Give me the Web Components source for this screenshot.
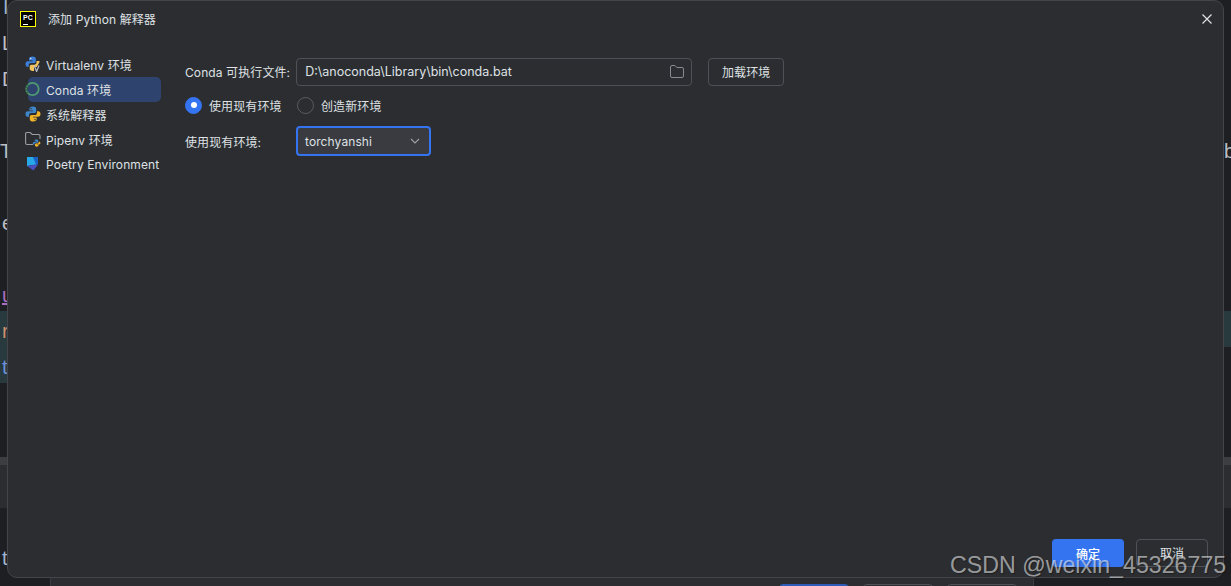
<!DOCTYPE html>
<html lang="zh">
<head>
<meta charset="utf-8">
<title>添加 Python 解释器</title>
<style>
  html, body { margin: 0; height: 100%; background: #1e1f22; overflow: hidden; }
  body { font: 12px "Inter", "Noto Sans CJK SC", sans-serif; letter-spacing: .1px; color: #dfe1e5; }
  svg { display: block; }
</style>
</head>
<body>

<ide-backdrop>
  <code-row style="color:#9fb4d0;padding-left:3.5px">l</code-row>
  <code-row style="color:#bcbec4">L</code-row>
  <code-row style="color:#bcbec4">D</code-row>
  <code-row></code-row>
  <code-row style="color:#bcbec4;padding:0">T<span slot="end" style="margin-right:-4px">b</span></code-row>
  <code-row></code-row>
  <code-row style="color:#bcbec4">e</code-row>
  <code-row></code-row>
  <code-row style="color:#a96fc0"><u>u</u></code-row>
  <code-row tint="full" style="color:#cf8e6d">r</code-row>
  <code-row tint="left" style="color:#6f8fd8">t</code-row>
</ide-backdrop>

<add-dialog>
  <span slot="title">添加 Python 解释器</span>

  <env-item slot="nav">
    <svg slot="icon" width="16" height="16" viewBox="0 0 16 16">
      <path fill="#3d7fd6" d="M7.500.5C5 .5 4 1.500 4 3v1.600h3.600v.6H2.600C1.200 5.200.5 6.300.5 7.900s.7 2.900 2.100 2.900h1.200V9.100c0-1.200 1-2.100 2.200-2.100h3c1 0 1.800-.8 1.800-1.800V2.800C10.800 1.300 9.500.5 7.500.5z"/>
      <circle cx="5.700" cy="2.500" r=".7" fill="#fff"/>
      <path fill="#f2c55c" d="M11.500 5v1.500c0 1.300-1 2.200-2.200 2.200H6.500C5.500 8.700 4.700 9.500 4.700 10.500v2.300c0 1.300 1.300 2.200 3 2.200h1.300V11h2.800l3-5.500C14.500 5.200 13.500 5 12.800 5z"/>
      <path fill="none" stroke="#b4b8bf" stroke-width="1.300" d="M9.200 9.500l2.400 6 2.400-6"/>
    </svg>
    Virtualenv 环境
  </env-item>

  <env-item slot="nav" selected>
    <svg slot="icon" width="16" height="16" viewBox="0 0 16 16">
      <circle cx="7.500" cy="8" r="6.200" fill="none" stroke="#4f9a70" stroke-width="1.800"/>
      <path fill="none" stroke="#2f5f47" stroke-width="1.800" stroke-dasharray="1.500 1.100" d="M2.700 12.200A6.200 6.200 0 0 1 3.900 3"/>
    </svg>
    Conda 环境
  </env-item>

  <env-item slot="nav">
    <svg slot="icon" width="16" height="16" viewBox="0 0 16 16">
      <path fill="#3f86c9" d="M7.800.5C5.300.5 4.300 1.500 4.300 3v1.600h3.600v.6H2.800C1.300 5.200.5 6.300.5 7.900s.8 2.900 2.300 2.900h1.200V9.100c0-1.200 1-2.100 2.200-2.100h3.200c1 0 1.800-.8 1.800-1.800V2.800C11.200 1.300 9.800.5 7.800.5z"/>
      <circle cx="6" cy="2.500" r=".7" fill="#2b2d30"/>
      <path fill="#f0b429" d="M8.200 15.500c2.500 0 3.500-1 3.500-2.500v-1.600H8.100v-.6h5.100c1.500 0 2.300-1.100 2.300-2.700s-.8-2.900-2.300-2.900H12v1.700c0 1.200-1 2.100-2.200 2.100H6.600c-1 0-1.800.8-1.800 1.800v2.400c0 1.500 1.400 2.300 3.400 2.300z"/>
      <circle cx="10" cy="13.500" r=".7" fill="#2b2d30"/>
    </svg>
    系统解释器
  </env-item>

  <env-item slot="nav">
    <svg slot="icon" width="16" height="16" viewBox="0 0 16 16">
      <path fill="none" stroke="#9a9da3" stroke-width="1.100" d="M8 13.500H2A1.500 1.500 0 0 1 .6 12V2.500A1 1 0 0 1 1.600 1.500h3.600l2 2h6.300a1.500 1.500 0 0 1 1.500 1.500v3"/>
      <path fill="#3f86c9" d="M11.500 8.500c-1.300 0-1.800.5-1.800 1.200v.8h1.900v.4H9c-.8 0-1.200.6-1.200 1.300s.4 1.400 1.200 1.400h.6v-.8c0-.7.5-1.100 1.100-1.100h1.600c.5 0 .9-.4.900-.9V9.700c0-.7-.7-1.200-1.700-1.200z"/>
      <path fill="#f0b429" d="M11.700 15.800c1.300 0 1.800-.5 1.800-1.200v-.8h-1.900v-.4h2.600c.8 0 1.200-.6 1.200-1.300s-.4-1.400-1.200-1.400H13.600v.8c0 .7-.5 1.100-1.100 1.100h-1.600c-.5 0-.9.4-.9.9v1.100c0 .7.700 1.200 1.700 1.200z"/>
    </svg>
    Pipenv 环境
  </env-item>

  <env-item slot="nav">
    <svg slot="icon" width="16" height="16" viewBox="0 0 16 16">
      <path fill="#1b62c8" d="M8 1h5v7.500l-3 .5z"/>
      <path fill="#27a9e8" d="M2 1h6l3 7.500L2 10z"/>
      <path fill="#4a4fc0" d="M2 10l9-1.500h2l-4.500 6z"/>
    </svg>
    Poetry Environment
  </env-item>

  <form-row slot="form" height="28" gap="6">
    <span style="padding-bottom:1px">Conda 可执行文件:</span>
    <path-field>D:\anoconda\Library\bin\conda.bat</path-field>
    <outline-button style="margin-left:10px;width:76px">加载环境</outline-button>
  </form-row>
  <form-row slot="form" height="18" top="10">
    <radio-option checked style="width:112px">使用现有环境</radio-option>
    <radio-option>创造新环境</radio-option>
  </form-row>
  <form-row slot="form" height="30" top="12">
    <span style="width:111px">使用现有环境:</span>
    <env-select>torchyanshi</env-select>
  </form-row>

  <primary-button slot="actions">确定</primary-button>
  <outline-button slot="actions" style="width:72px;height:28px">取消</outline-button>
</add-dialog>

<csdn-mark>CSDN @weixin_45326775</csdn-mark>

<script>
class CodeRow extends HTMLElement {
  constructor() {
    super();
    this.attachShadow({ mode: "open" }).innerHTML = `
      <style>
        :host {
          display: flex;
          justify-content: space-between;
          height: 36px;
          padding: 0 1px 0 2px;
          letter-spacing: 0;
          font: 20px/41px "Liberation Sans", sans-serif;
        }
        :host([tint="full"]) { background: #283a3d; }
        :host([tint="left"]) { background: linear-gradient(90deg, #283a3d 50px, transparent 50px); }
      </style>
      <span><slot></slot></span>
      <slot name="end"></slot>`;
  }
}

class IdeBackdrop extends HTMLElement {
  constructor() {
    super();
    this.attachShadow({ mode: "open" }).innerHTML = `
      <style>
        :host {
          display: flex;
          flex-direction: column;
          height: 586px;
          overflow: hidden;
        }
        .lines { height: 470px; margin-top: -13px; flex: none; }
        .bar { height: 8px; background: #3c3e41; flex: none; }
        .panel { height: 43px; background: #2b2d30; flex: none; }
        .tool {
          flex: 1;
          padding: 38px 0 0 2px;
          color: #9fb4d0;
          font: 20px/24px "Liberation Sans", sans-serif;
        }
        .strip {
          height: 8px;
          flex: none;
          display: flex;
        }
        .strip .edge { width: 50px; }
        .strip .mid {
          width: 984px;
          box-sizing: border-box;
          background: #2b2d30;
          border-left: 1px solid #393b40;
          border-right: 1px solid #393b40;
          padding: 6px 0 0 728px;
          display: flex;
          gap: 14px;
        }
        .strip i { display: block; width: 70px; height: 8px; box-sizing: border-box; border: 1px solid #4e5157; border-radius: 4px 4px 0 0; }
        .strip i.on { background: #2e5bb8; border-color: #2e5bb8; }
      </style>
      <div class="lines"><slot></slot></div>
      <div class="bar"></div>
      <div class="panel"></div>
      <div class="tool">t</div>
      <div class="strip">
        <div class="edge"></div>
        <div class="mid"><i class="on"></i><i></i><i></i></div>
      </div>`;
  }
}

class AddDialog extends HTMLElement {
  constructor() {
    super();
    this.attachShadow({ mode: "open" }).innerHTML = `
      <style>
        :host {
          position: absolute;
          left: 7px;
          top: 0;
          width: 1217px;
          height: 578px;
          box-sizing: border-box;
          display: flex;
          flex-direction: column;
          background: #2b2d30;
          border: 1px solid #43454a;
          border-radius: 10px;
          color: #dfe1e5;
        }
        .head {
          height: 36px;
          flex: none;
          display: flex;
          align-items: center;
          padding: 0 10px 0 12px;
          gap: 12px;
        }
        .logo {
          width: 16px;
          height: 16px;
          box-sizing: border-box;
          border: 1px solid #ffff00;
          background: #000;
          color: #fff;
          font: bold 7px/9px "Liberation Sans", sans-serif;
          letter-spacing: 0;
          padding: 1px 0 0 2px;
          position: relative;
        }
        .logo::after {
          content: "";
          position: absolute;
          left: 2px;
          bottom: 1px;
          width: 5px;
          height: 1px;
          background: #fff;
        }
        .title { flex: 1; padding-bottom: 2px; }
        .body {
          flex: 1;
          display: flex;
          min-height: 0;
        }
        .nav {
          width: 153px;
          box-sizing: border-box;
          padding: 15px 0 0 20px;
          flex: none;
        }
        .content {
          flex: 1;
          padding: 21px 0 0 24px;
        }
        .foot {
          flex: none;
          height: 38px;
          display: flex;
          justify-content: flex-end;
          align-items: flex-start;
          gap: 12px;
          padding-right: 15px;
        }
      </style>
      <div class="head">
        <div class="logo">PC</div>
        <div class="title"><slot name="title"></slot></div>
        <svg width="12" height="12" viewBox="0 0 12 12"><path d="M1.500 1.500l9 9M10.500 1.500l-9 9" stroke="#dfe1e5" stroke-width="1.200" fill="none"/></svg>
      </div>
      <div class="body">
        <div class="nav"><slot name="nav"></slot></div>
        <div class="content"><slot name="form"></slot></div>
      </div>
      <div class="foot"><slot name="actions"></slot></div>`;
  }
}

class EnvItem extends HTMLElement {
  constructor() {
    super();
    this.attachShadow({ mode: "open" }).innerHTML = `
      <style>
        :host {
          display: flex;
          align-items: center;
          height: 25px;
          width: 133px;
          box-sizing: border-box;
          padding: 0 0 1px 18px;
          position: relative;
          white-space: nowrap;
          border-radius: 5px;
        }
        :host([selected]) { background: #2e436e; }
        .icon { position: absolute; left: -3px; top: 4px; }
      </style>
      <div class="icon"><slot name="icon"></slot></div>
      <slot></slot>`;
  }
}

class FormRow extends HTMLElement {
  static get observedAttributes() { return ["height", "top", "gap"]; }
  constructor() {
    super();
    this.attachShadow({ mode: "open" }).innerHTML = `
      <style>
        :host {
          display: flex;
          align-items: center;
          white-space: nowrap;
        }
      </style>
      <slot></slot>`;
  }
  attributeChangedCallback() {
    this.style.height = (this.getAttribute("height") || 28) + "px";
    this.style.marginTop = (this.getAttribute("top") || 0) + "px";
    this.style.gap = (this.getAttribute("gap") || 0) + "px";
  }
}

class PathField extends HTMLElement {
  constructor() {
    super();
    this.attachShadow({ mode: "open" }).innerHTML = `
      <style>
        :host {
          display: flex;
          align-items: center;
          justify-content: space-between;
          width: 396px;
          height: 28px;
          box-sizing: border-box;
          padding: 0 7px 1px 8px;
          font-size: 12.500px;
          letter-spacing: 0;
          border: 1px solid #4e5157;
          border-radius: 4px;
        }
      </style>
      <span><slot></slot></span>
      <svg width="14" height="13" viewBox="0 0 14 13" fill="none" style="display:block"><path d="M.5 2A1.500 1.500 0 0 1 2 .5h3l1.800 2h5.200A1.500 1.500 0 0 1 13.500 4v7a1.500 1.500 0 0 1-1.500 1.500H2A1.500 1.500 0 0 1 .5 11z" stroke="#868a91"/></svg>`;
  }
}

class OutlineButton extends HTMLElement {
  constructor() {
    super();
    this.attachShadow({ mode: "open" }).innerHTML = `
      <style>
        :host {
          display: flex;
          align-items: center;
          justify-content: center;
          height: 28px;
          box-sizing: border-box;
          padding-bottom: 1px;
          border: 1px solid #4e5157;
          border-radius: 4px;
        }
      </style>
      <slot></slot>`;
  }
}

class PrimaryButton extends HTMLElement {
  constructor() {
    super();
    this.attachShadow({ mode: "open" }).innerHTML = `
      <style>
        :host {
          display: flex;
          align-items: center;
          justify-content: center;
          width: 72px;
          height: 28px;
          background: #3574f0;
          color: #fff;
          border-radius: 4px;
          font-weight: 500;
        }
      </style>
      <slot></slot>`;
  }
}

class RadioOption extends HTMLElement {
  constructor() {
    super();
    this.attachShadow({ mode: "open" }).innerHTML = `
      <style>
        :host {
          display: flex;
          align-items: center;
          gap: 7px;
        }
        .dot {
          width: 17px;
          height: 17px;
          box-sizing: border-box;
          border-radius: 50%;
          border: 1px solid #5a5d63;
          flex: none;
          display: flex;
          align-items: center;
          justify-content: center;
        }
        :host([checked]) .dot { background: #3574f0; border-color: #3574f0; }
        :host([checked]) .dot::after {
          content: "";
          width: 6px;
          height: 6px;
          border-radius: 50%;
          background: #fff;
        }
      </style>
      <div class="dot"></div>
      <slot></slot>`;
  }
}

class EnvSelect extends HTMLElement {
  constructor() {
    super();
    this.attachShadow({ mode: "open" }).innerHTML = `
      <style>
        :host {
          display: flex;
          align-items: center;
          justify-content: space-between;
          width: 135px;
          height: 30px;
          box-sizing: border-box;
          padding: 0 9px 0 7px;
          background: #393b40;
          border: 2px solid #3574f0;
          border-radius: 4px;
        }
      </style>
      <span><slot></slot></span>
      <svg width="10" height="6" viewBox="0 0 10 6" fill="none" style="display:block"><path d="M1 1l4 4 4-4" stroke="#9da0a8" stroke-width="1.100"/></svg>`;
  }
}

class CsdnMark extends HTMLElement {
  constructor() {
    super();
    this.attachShadow({ mode: "open" }).innerHTML = `
      <style>
        :host {
          position: absolute;
          left: 950px;
          top: 552px;
          font: 23.200px/26px "Liberation Sans", sans-serif;
          letter-spacing: 0;
          color: rgba(255, 255, 255, 0.55);
          text-shadow: 1px 1px 1px rgba(0, 0, 0, 0.35);
          white-space: nowrap;
        }
      </style>
      <slot></slot>`;
  }
}

customElements.define("code-row", CodeRow);
customElements.define("ide-backdrop", IdeBackdrop);
customElements.define("add-dialog", AddDialog);
customElements.define("env-item", EnvItem);
customElements.define("form-row", FormRow);
customElements.define("path-field", PathField);
customElements.define("outline-button", OutlineButton);
customElements.define("primary-button", PrimaryButton);
customElements.define("radio-option", RadioOption);
customElements.define("env-select", EnvSelect);
customElements.define("csdn-mark", CsdnMark);
</script>
</body>
</html>
